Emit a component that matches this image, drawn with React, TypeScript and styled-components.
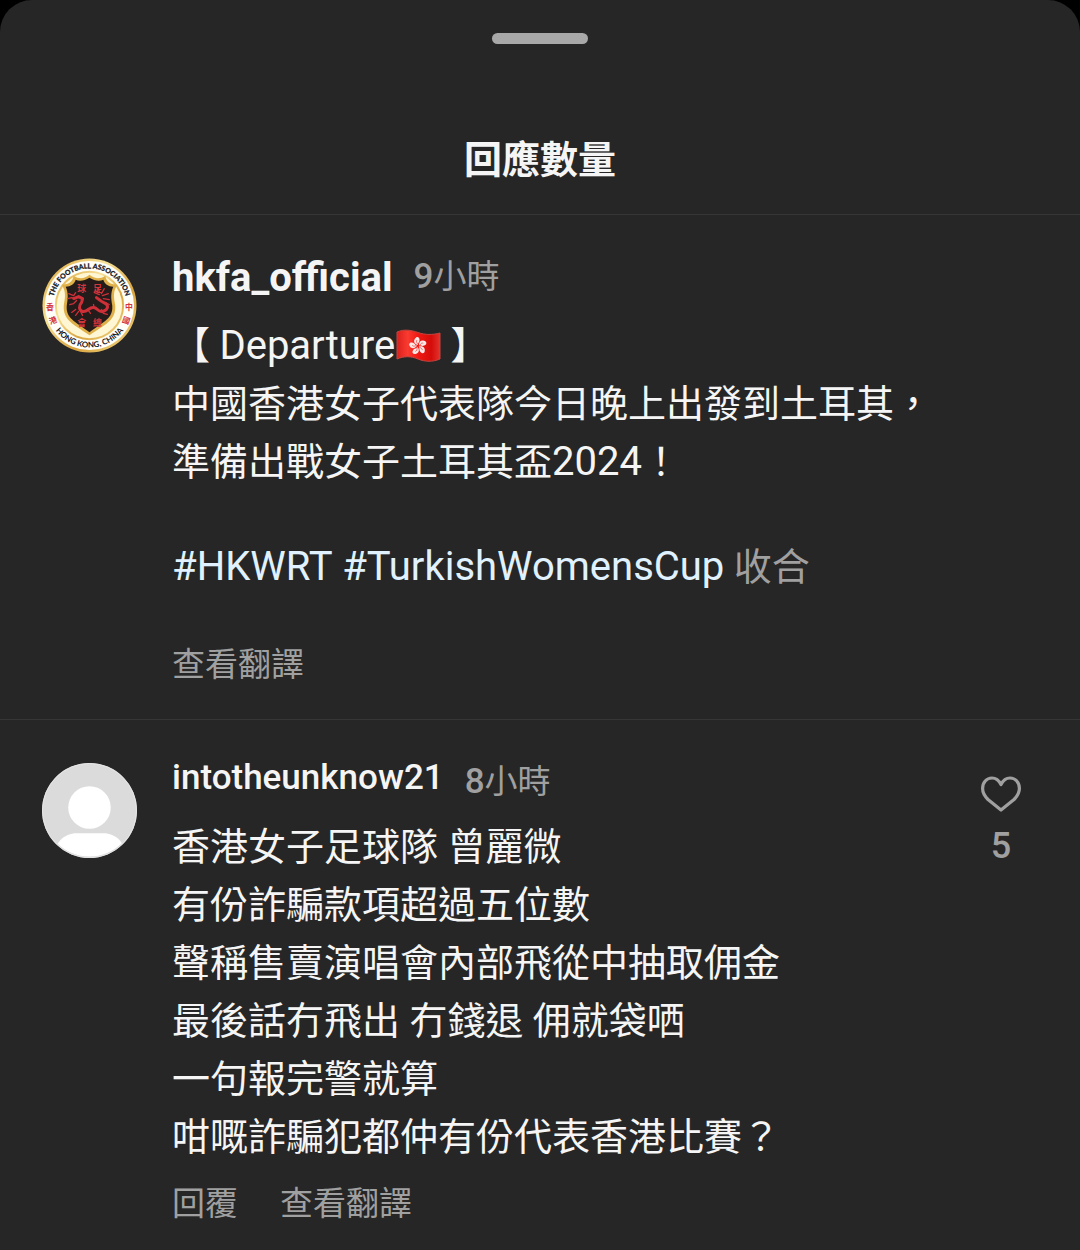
import React from "react";
import styled, { createGlobalStyle } from "styled-components";

const GlobalStyle = createGlobalStyle`
  *, *::before, *::after { box-sizing: border-box; }
  body {
    margin: 0;
    background: #000;
    color: #f5f5f5;
    font-family: Roboto, "Noto Sans CJK TC", sans-serif;
  }
  button { font: inherit; border: 0; padding: 0; background: none; cursor: pointer; }
`;

const Sheet = styled.main`
  min-height: 100vh;
  background: #262626;
  border-radius: 32px 32px 0 0;
`;

const Header = styled.header`
  display: flex;
  flex-direction: column;
  align-items: center;
  gap: 88px;
  padding: 33px 0 26px;
  border-bottom: 1px solid #363636;
`;

const Handle = styled.div`
  width: 96px;
  height: 11px;
  border-radius: 6px;
  background: #a8a8a8;
`;

const Title = styled.h1`
  margin: 0;
  font-size: 38px;
  line-height: 56px;
  font-weight: 700;
`;

const Entry = styled.article<{ $divided?: boolean }>`
  display: flex;
  align-items: flex-start;
  gap: 35px;
  padding: 32px 42px 28px;
  border-bottom: ${(p) => (p.$divided ? "1px solid #363636" : "0")};
`;

const AvatarLink = styled.a`
  flex: none;
  display: block;
  width: 95px;
  height: 95px;
  margin-top: 11px;
  svg { display: block; width: 100%; height: 100%; }
`;

const Content = styled.div`
  flex: 1;
  min-width: 0;
`;

const Meta = styled.div<{ $large?: boolean }>`
  display: flex;
  align-items: flex-start;
  gap: 21px;
  height: ${(p) => (p.$large ? 70 : 66)}px;
  padding-top: 4px;
`;

const Name = styled.a<{ $large?: boolean }>`
  color: #f5f5f5;
  text-decoration: none;
  font-size: ${(p) => (p.$large ? 40 : 35)}px;
  line-height: ${(p) => (p.$large ? 54 : 44)}px;
  font-weight: ${(p) => (p.$large ? 700 : 500)};
`;

const Time = styled.time`
  color: #a0a0a0;
  font-size: 33px;
  line-height: 52px;
`;

const Digit = styled.span`
  font-size: 35px;
  font-weight: 500;
`;

const Text = styled.p<{ $gap?: boolean }>`
  margin: ${(p) => (p.$gap ? "47px" : "0")} 0 0;
  font-size: 38px;
  line-height: 58px;
`;

const Latin = styled.span`
  font-size: 40px;
`;

const Tag = styled.a`
  color: #e0f1ff;
  font-size: 40px;
  text-decoration: none;
`;

const Collapse = styled.button`
  color: #a0a0a0;
`;

const Flag = styled.svg`
  width: 46px;
  height: 34px;
  vertical-align: -4px;
`;

const Actions = styled.div<{ $spaced?: boolean }>`
  display: flex;
  gap: 42px;
  padding-top: ${(p) => (p.$spaced ? 43 : 12)}px;
`;

const Action = styled.button`
  color: #a0a0a0;
  && { font-size: 33px; line-height: 52px; }
`;

const Like = styled.button`
  display: flex;
  flex-direction: column;
  align-items: center;
  gap: 12px;
  width: 42px;
  margin: 24px 16px 0 0;
  color: #a0a0a0;
  svg { display: block; width: 42px; height: 36px; }
  && { font-size: 36px; line-height: 44px; font-weight: 500; }
`;

function CrestAvatar() {
  return (
    <svg viewBox="0 0 96 96" aria-hidden="true">
      <defs>
        <linearGradient id="gold" x1="0" y1="0" x2="1" y2="1">
          <stop offset="0" stopColor="#d99f32" />
          <stop offset=".35" stopColor="#f8e39a" />
          <stop offset=".65" stopColor="#d9a43e" />
          <stop offset="1" stopColor="#f5dc8a" />
        </linearGradient>
        <path id="arcTop" d="M10.500 48a37.500 37.500 0 0 1 75 0" />
        <path id="arcBottom" d="M5.500 48a42.500 42.500 0 0 0 85 0" />
      </defs>
      <circle cx="48" cy="48" r="47.500" fill="url(#gold)" />
      <circle cx="48" cy="48" r="45" fill="#fffef8" />
      <circle cx="48" cy="48" r="35" fill="url(#gold)" />
      <circle cx="48" cy="48" r="33" fill="#fff6d4" />
      <path d="M48 17c5 4 10 5 16 1 1 6 5 9 12 9-5 8-3 14-2 21 1 15-10 19-26 30-16-11-27-15-26-30 1-7 3-13-2-21 7 0 11-3 12-9 6 4 11 3 16-1z" fill="#dfb04a" />
      <path d="M48 20c5 3 10 4 14 2 1 4 5 7 10 7-3 7-2 13-1 19 1 13-8 16-23 27-15-11-24-14-23-27 1-6 2-12-1-19 5 0 9-3 10-7 4 2 9 1 14-2z" fill="#241b1b" />
      <g fill="none" stroke="#cf3038" strokeLinecap="round" strokeLinejoin="round">
        <path strokeWidth="3" d="M32 41l5-2 4 2-1 4c-3 3-3 8 1 9 5 1 7-5 11-4 4 0 4 4 8 4s7-3 6-6-5-3-7-5l-4-3" />
        <path strokeWidth="1.300" d="M26 41l4-1 3 1m-6-5l5 2 2-3m-6 12l4-1 3-3m-1 9l-4 3m7-1l-3 4m5-4l2 4m5-6l3 4m4-5l-1-4m8 5l2 4 4 1m-8-20l-5-2m5 0l-1-5m3 6l3-5m-2 7l6-2m-5 5l6 1m-4 3l4 2" />
      </g>
      <g fill="#d3353b" fontFamily="'Noto Sans CJK TC', sans-serif" fontWeight="700" textAnchor="middle">
        <g fontSize="9">
          <text x="40" y="34">球</text>
          <text x="56" y="34">足</text>
          <text x="40" y="69">會</text>
          <text x="56" y="69">總</text>
        </g>
        <g fontSize="8">
          <text x="8" y="53">香</text>
          <text x="11" y="66" transform="rotate(-20 11 63)">港</text>
          <text x="88" y="53">中</text>
          <text x="85" y="66" transform="rotate(20 85 63)">國</text>
        </g>
      </g>
      <g fill="#15151c" fontFamily="Lato, sans-serif" fontWeight="700" textAnchor="middle">
        <text fontSize="7" stroke="#15151c" strokeWidth=".3"><textPath href="#arcTop" startOffset="50%">THE FOOTBALL ASSOCIATION</textPath></text>
        <text fontSize="8"><textPath href="#arcBottom" startOffset="50%">HONG KONG, CHINA</textPath></text>
      </g>
    </svg>
  );
}

function DefaultAvatar() {
  return (
    <svg viewBox="0 0 96 96" aria-hidden="true">
      <defs>
        <clipPath id="disc"><circle cx="48" cy="48" r="46.500" /></clipPath>
      </defs>
      <circle cx="48" cy="48" r="48" fill="#dbdbdb" />
      <g fill="#fff" clipPath="url(#disc)">
        <circle cx="48" cy="45" r="21.500" />
        <path d="M12 96c0-15 10-25 23-25h27c13 0 23 10 23 25z" />
      </g>
      <circle cx="48" cy="48" r="47.500" fill="none" stroke="#e6e6e6" />
    </svg>
  );
}

function HongKongFlag() {
  return (
    <Flag viewBox="0 0 46 34" role="img" aria-label="Hong Kong">
      <defs>
        <linearGradient id="cloth">
          <stop offset="0" stopColor="#d9201c" />
          <stop offset=".25" stopColor="#fa3b31" />
          <stop offset=".5" stopColor="#f01812" />
          <stop offset=".8" stopColor="#d40d0a" />
          <stop offset="1" stopColor="#e3322c" />
        </linearGradient>
      </defs>
      <path d="M2 3C9 0 16 1 23 3.500S38 6 45 4v26c-7 3-15 3-22 0S9 27 2 30z" fill="url(#cloth)" stroke="#c4443e" strokeWidth="1" />
      <g transform="translate(23 17)" fill="#fbe9e8">
        {[-10, 62, 134, 206, 278].map((a) => (
          <g key={a} transform={`rotate(${a})`}>
            <path d="M0-1C-4-3-4-7 0-9c3 0 3 3 2 5-1 1-2 2-2 3z" />
            <path d="M0-2c-1-2-1-3 0-4" fill="none" stroke="#e0302a" strokeWidth=".6" />
          </g>
        ))}
      </g>
    </Flag>
  );
}

function Heart() {
  return (
    <svg viewBox="0 0 42 36" fill="none" stroke="currentColor" strokeWidth="3.200" strokeLinejoin="round" aria-hidden="true">
      <path d="M21 8.500C19 4.500 16 2 12 2 6.500 2 2.600 6.500 2.600 12.500c0 5 2.400 8 5.400 11L21 34l13-10.500c3-3 5.400-6 5.400-11C39.400 6.500 35.500 2 30 2c-4 0-7 2.500-9 6.500z" />
    </svg>
  );
}

const commentLines = [
  "香港女子足球隊 曾麗微",
  "有份詐騙款項超過五位數",
  "聲稱售賣演唱會內部飛從中抽取佣金",
  "最後話冇飛出 冇錢退 佣就袋哂",
  "一句報完警就算",
  "咁嘅詐騙犯都仲有份代表香港比賽？",
];

export default function App() {
  return (
    <>
      <GlobalStyle />
      <Sheet lang="zh-Hant">
        <Header>
          <Handle />
          <Title>回應數量</Title>
        </Header>

        <Entry $divided>
          <AvatarLink href="#hkfa_official" aria-label="hkfa_official"><CrestAvatar /></AvatarLink>
          <Content>
            <Meta $large>
              <Name $large href="#hkfa_official">hkfa_official</Name>
              <Time><Digit>9</Digit>小時</Time>
            </Meta>
            <Text>
              【 <Latin>Departure</Latin><HongKongFlag /> 】<br />
              中國香港女子代表隊今日晚上出發到土耳其，<br />
              準備出戰女子土耳其盃<Latin>2024</Latin>！
            </Text>
            <Text $gap>
              <Tag href="#HKWRT">#HKWRT</Tag> <Tag href="#TurkishWomensCup">#TurkishWomensCup</Tag>{" "}
              <Collapse type="button">收合</Collapse>
            </Text>
            <Actions $spaced><Action type="button">查看翻譯</Action></Actions>
          </Content>
        </Entry>

        <Entry>
          <AvatarLink href="#intotheunknow21" aria-label="intotheunknow21"><DefaultAvatar /></AvatarLink>
          <Content>
            <Meta>
              <Name href="#intotheunknow21">intotheunknow21</Name>
              <Time><Digit>8</Digit>小時</Time>
            </Meta>
            <Text>
              {commentLines.map((line) => (
                <React.Fragment key={line}>{line}<br /></React.Fragment>
              ))}
            </Text>
            <Actions>
              <Action type="button">回覆</Action>
              <Action type="button">查看翻譯</Action>
            </Actions>
          </Content>
          <Like type="button" aria-label="5"><Heart /><span>5</span></Like>
        </Entry>
      </Sheet>
    </>
  );
}
